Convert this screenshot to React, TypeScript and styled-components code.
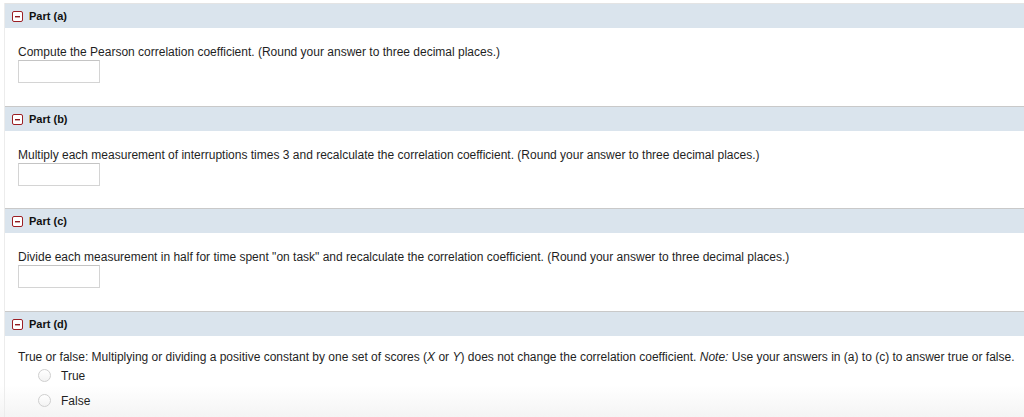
import styled, { createGlobalStyle } from "styled-components";

const GlobalStyle = createGlobalStyle`
  html, body {
    margin: 0;
    padding: 0;
    background: #fff;
  }
  body {
    font-family: "Liberation Sans", Arial, Helvetica, sans-serif;
    font-size: 12px;
    color: #1f1f1f;
  }
`;

const Page = styled.div`
  width: 1024px;
  height: 417px;
  overflow: hidden;
  padding-top: 3px;
  box-sizing: border-box;
  background: linear-gradient(to bottom, #fff 0, #fff 385px, #f4f4f4 417px);
`;

const Frame = styled.div`
  margin-left: 4px;
  border-left: 1px solid #ececec;
`;

const Section = styled.section<{ $gap?: number }>`
  padding-bottom: ${({ $gap }) => $gap ?? 23}px;
`;

const Header = styled.div<{ $first?: boolean }>`
  height: 24px;
  border-top: 1px solid ${({ $first }) => ($first ? "#e4e4e4" : "#c9c9c9")};
  background: #dae4ed;
  display: flex;
  align-items: center;
  gap: 6px;
  padding-left: 7px;
  font-weight: 700;
  font-size: 11px;
  color: #111;
`;

const Body = styled.div<{ $tight?: boolean }>`
  padding: ${({ $tight }) => ($tight ? "14px" : "17px")} 0 0 13px;
`;

const Prompt = styled.div`
  line-height: 14px;
  height: 14px;
  white-space: nowrap;
`;

const AnswerInput = styled.input`
  display: block;
  width: 82px;
  height: 23px;
  box-sizing: border-box;
  margin-top: 1px;
  border: 1px solid #d4d4d4;
  border-top-color: #c4c4c4;
  background: #fff;
  padding: 0 4px;
  font: inherit;
`;

const Options = styled.div`
  display: grid;
  padding-left: 20px;
  margin-top: -1px;
`;

const OptionRow = styled.label`
  display: flex;
  align-items: center;
  gap: 10px;
  height: 25px;
  font-size: 12px;
`;

const Radio = styled.span`
  width: 11px;
  height: 11px;
  border-radius: 50%;
  border: 1px solid #cfcfcf;
  background: linear-gradient(#fff, #f3f3f3);
`;

function CollapseIcon() {
  return (
    <svg width="11" height="11" viewBox="0 0 11 11">
      <rect x="0.5" y="0.5" width="10" height="10" rx="1.5" fill="#fff" stroke="#9c1f24" />
      <rect x="3" y="5" width="5" height="1.4" fill="#8e1a1f" />
    </svg>
  );
}

const parts = [
  {
    id: "a",
    gap: 23,
    prompt:
      "Compute the Pearson correlation coefficient. (Round your answer to three decimal places.)",
  },
  {
    id: "b",
    gap: 22,
    prompt:
      "Multiply each measurement of interruptions times 3 and recalculate the correlation coefficient. (Round your answer to three decimal places.)",
  },
  {
    id: "c",
    gap: 23,
    prompt:
      'Divide each measurement in half for time spent "on task" and recalculate the correlation coefficient. (Round your answer to three decimal places.)',
  },
];

export default function App() {
  return (
    <>
      <GlobalStyle />
      <Page>
        <Frame>
          {parts.map((p, i) => (
            <Section key={p.id} $gap={p.gap}>
              <Header $first={i === 0}>
                <CollapseIcon />
                Part ({p.id})
              </Header>
              <Body>
                <Prompt>{p.prompt}</Prompt>
                <AnswerInput type="text" />
              </Body>
            </Section>
          ))}
          <Section>
            <Header>
              <CollapseIcon />
              Part (d)
            </Header>
            <Body $tight>
              <Prompt>
                True or false: Multiplying or dividing a positive constant by one set of scores (
                <i>X</i> or <i>Y</i>) does not change the correlation coefficient.{" "}
                <i>Note:</i> Use your answers in (a) to (c) to answer true or false.
              </Prompt>
              <Options>
                <OptionRow>
                  <Radio />
                  True
                </OptionRow>
                <OptionRow>
                  <Radio />
                  False
                </OptionRow>
              </Options>
            </Body>
          </Section>
        </Frame>
      </Page>
    </>
  );
}
